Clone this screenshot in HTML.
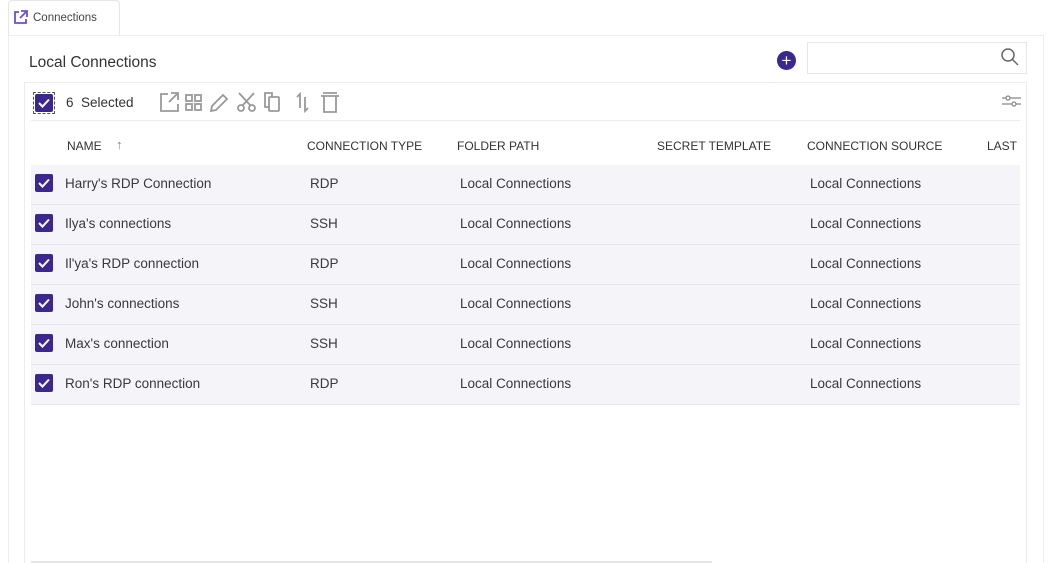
<!DOCTYPE html>
<html><head><style>
html,body{margin:0;width:1049px;height:563px;overflow:hidden}
body{background:#fff;font-family:"Liberation Sans",sans-serif;color:#333;position:relative}
.a{position:absolute}
.cb{position:absolute;width:18px;height:18px;background:#3a2790;border-radius:2px}
.cb svg{position:absolute;left:2px;top:2px}
.row{position:absolute;left:31px;width:989px;height:39px;background:#f4f4f9;border-bottom:1px solid #e6e6ec}
.row span{position:absolute;top:11px;font-size:13.5px;color:#3a3a3a}
.hd{position:absolute;top:139px;font-size:12px;color:#333}
.ic{position:absolute;top:92px}
</style></head><body>
<div class="a" style="left:8px;top:0;width:110px;height:35px;border:1px solid #e6e6e6;border-bottom:none;border-radius:4px 4px 0 0;background:#fff"></div>
<svg class="a" style="left:13px;top:10px" width="15" height="15" viewBox="0 0 15 15" fill="none" stroke="#6a4fd8" stroke-width="1.8"><path d="M6 2H2v11h11V9"/><path d="M8 1h6v6M14 1L7 8"/></svg>
<div class="a" style="left:33px;top:12px;font-size:11.5px;color:#444">Connections</div>
<div class="a" style="left:8px;top:35px;width:1034px;height:540px;border:1px solid #eeeeee;border-bottom:none"></div>
<div class="a" style="left:29px;top:54px;font-size:15.5px;color:#333">Local Connections</div>
<div class="a" style="left:777px;top:51px;width:19px;height:19px;border-radius:50%;background:#3a2790;color:#fff;font-size:17px;line-height:19px;text-align:center">+</div>
<div class="a" style="left:807px;top:42px;width:218px;height:30px;border:1px solid #e6e6e6"></div>
<svg class="a" style="left:1000px;top:47px" width="20" height="20" viewBox="0 0 20 20" fill="none" stroke="#666" stroke-width="1.5"><circle cx="8" cy="8" r="6"/><path d="M12.5 12.5L18 18"/></svg>
<div class="a" style="left:24px;top:82px;width:1001px;height:490px;border:1px solid #ececec"></div>
<div class="a" style="left:31px;top:120px;width:989px;height:1px;background:#ececec"></div>
<div class="a" style="left:33px;top:92px;width:20px;height:20px;border:1px dashed #555"></div>
<div class="cb" style="left:35px;top:94px"><svg width="14" height="14" viewBox="0 0 14 14"><path d="M2 7l3.5 3.5L12 3.5" stroke="#fff" stroke-width="2" fill="none"/></svg></div>
<div class="a" style="left:66px;top:95px;font-size:13.5px;color:#333">6 &nbsp;Selected</div>
<svg class="ic" style="left:160px" width="182" height="22" viewBox="0 0 182 22" fill="none" stroke="#999" stroke-width="1.8">
<path d="M8 2H1v17h17v-7"/><path d="M11 1h7v7M18 1L9 10"/>
<rect x="26" y="3" width="6" height="6"/><rect x="35" y="3" width="6" height="6"/><rect x="26" y="12" width="6" height="6"/><rect x="35" y="12" width="6" height="6"/>
<path d="M51 19l1-5 11-11 4 4-11 11z"/>
<circle cx="81" cy="16" r="3"/><circle cx="92" cy="16" r="3"/><path d="M83 13l11-12M90 13L79 1"/>
<rect x="109" y="5" width="10" height="14" rx="1"/><path d="M112 5V1h-7v14h4"/>
<path d="M140 16V2l-3 3M145 5v14l3-3"/>
<path d="M161 4h18M164 4v16h12V4M163 1h14"/>
</svg>
<svg class="a" style="left:1001px;top:94px" width="20" height="14" viewBox="0 0 20 14" fill="none" stroke="#888" stroke-width="1.3"><path d="M1 4h20M1 10h20"/><circle cx="7" cy="4" r="2" fill="#fff"/><circle cx="13" cy="10" r="2" fill="#fff"/></svg>
<div class="hd" style="left:67px">NAME</div>
<div class="a" style="left:116px;top:137px;font-size:13px;color:#7b6cf0">↑</div>
<div class="hd" style="left:307px">CONNECTION TYPE</div>
<div class="hd" style="left:457px">FOLDER PATH</div>
<div class="hd" style="left:657px">SECRET TEMPLATE</div>
<div class="hd" style="left:807px">CONNECTION SOURCE</div>
<div class="hd" style="left:987px">LAST</div>

<div class="row" style="top:165px"><span style="left:34px">Harry's RDP Connection</span><span style="left:279px">RDP</span><span style="left:429px">Local Connections</span><span style="left:779px">Local Connections</span></div>
<div class="row" style="top:205px"><span style="left:34px">Ilya's connections</span><span style="left:279px">SSH</span><span style="left:429px">Local Connections</span><span style="left:779px">Local Connections</span></div>
<div class="row" style="top:245px"><span style="left:34px">Il'ya's RDP connection</span><span style="left:279px">RDP</span><span style="left:429px">Local Connections</span><span style="left:779px">Local Connections</span></div>
<div class="row" style="top:285px"><span style="left:34px">John's connections</span><span style="left:279px">SSH</span><span style="left:429px">Local Connections</span><span style="left:779px">Local Connections</span></div>
<div class="row" style="top:325px"><span style="left:34px">Max's connection</span><span style="left:279px">SSH</span><span style="left:429px">Local Connections</span><span style="left:779px">Local Connections</span></div>
<div class="row" style="top:365px"><span style="left:34px">Ron's RDP connection</span><span style="left:279px">RDP</span><span style="left:429px">Local Connections</span><span style="left:779px">Local Connections</span></div>

<div class="cb" style="left:35px;top:174px"><svg width="14" height="14" viewBox="0 0 14 14"><path d="M2 7l3.5 3.5L12 3.5" stroke="#fff" stroke-width="2" fill="none"/></svg></div>
<div class="cb" style="left:35px;top:214px"><svg width="14" height="14" viewBox="0 0 14 14"><path d="M2 7l3.5 3.5L12 3.5" stroke="#fff" stroke-width="2" fill="none"/></svg></div>
<div class="cb" style="left:35px;top:254px"><svg width="14" height="14" viewBox="0 0 14 14"><path d="M2 7l3.5 3.5L12 3.5" stroke="#fff" stroke-width="2" fill="none"/></svg></div>
<div class="cb" style="left:35px;top:294px"><svg width="14" height="14" viewBox="0 0 14 14"><path d="M2 7l3.5 3.5L12 3.5" stroke="#fff" stroke-width="2" fill="none"/></svg></div>
<div class="cb" style="left:35px;top:334px"><svg width="14" height="14" viewBox="0 0 14 14"><path d="M2 7l3.5 3.5L12 3.5" stroke="#fff" stroke-width="2" fill="none"/></svg></div>
<div class="cb" style="left:35px;top:374px"><svg width="14" height="14" viewBox="0 0 14 14"><path d="M2 7l3.5 3.5L12 3.5" stroke="#fff" stroke-width="2" fill="none"/></svg></div>

<div class="a" style="left:31px;top:561px;width:681px;height:2px;background:#e2e6e6"></div>
</body></html>
